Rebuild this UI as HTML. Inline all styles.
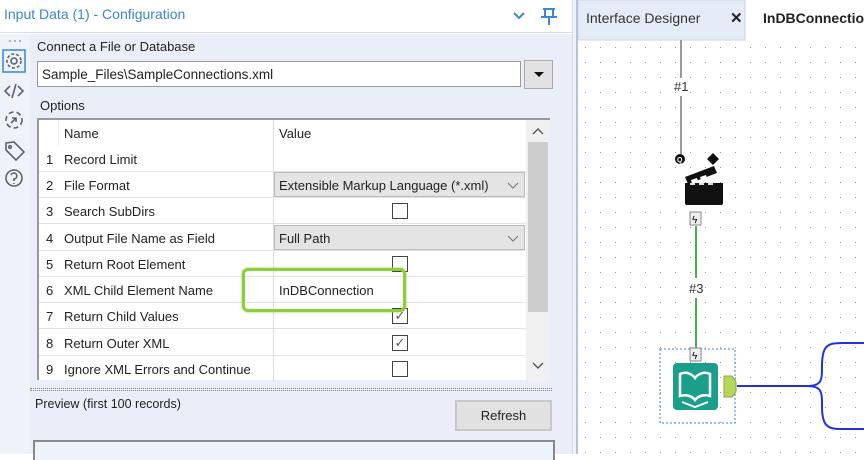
<!DOCTYPE html>
<html><head><meta charset="utf-8"><style>
*{margin:0;padding:0;box-sizing:border-box}
body{width:864px;height:454px;overflow:hidden;background:#fff;font-family:"Liberation Sans",sans-serif;font-size:13px;color:#222;position:relative}
.a{position:absolute}
.row{position:absolute;left:39px;width:487px;height:26px;border-bottom:1px solid #e2e2e2}
.row span{position:absolute;top:6px}
.n{left:7px}.nm{left:25px}
.cb{position:absolute;left:353px;top:5px;width:16px;height:16px;border:1px solid #444;background:#fff;font-size:13px;line-height:14px;text-align:center;color:#555}
.dd{position:absolute;left:235px;top:0;width:251px;height:25px;background:#e4e4e4;border:1px solid #bbb}
.dd svg{position:absolute;left:232px;top:9px}
</style></head><body>
<div class="a" style="left:0;top:0;width:572px;height:33px;background:#fff;border-bottom:1px solid #d8dde6"></div>
<div class="a" style="left:4px;top:6px;color:#3b86d6;font-size:14px">Input Data (1) - Configuration</div>
<svg class="a" style="left:512px;top:8px" width="50" height="18"><path d="M2 5l5 5 5-5" stroke="#3b86d6" stroke-width="2" fill="none"/><path d="M31 1h12M33 1v7M41 1v7M29 9h16M37 9v8" stroke="#3b86d6" stroke-width="2" fill="none"/></svg>
<div class="a" style="left:0;top:34px;width:30px;height:420px;background:#eef2f9"></div>
<div class="a" style="left:30px;top:34px;width:542px;height:420px;background:#e9eef8"></div>
<div class="a" style="left:572px;top:0;width:6px;height:454px;background:#eef2f9;border-left:1px solid #d5dbe6;border-right:2px solid #b7c3d8"></div>
<svg class="a" style="left:0;top:36px" width="30" height="160" fill="none" stroke="#5a6475" stroke-width="1.6">
<path d="M9 5h2M14 5h2M19 5h2" stroke="#999"/>
<rect x="3" y="14" width="22" height="22" stroke="#3b86d6" stroke-width="1.5"/>
<circle cx="14" cy="25" r="3"/><circle cx="14" cy="25" r="7" stroke-dasharray="3 2"/>
<path d="M10 50l-5 5 5 5M18 50l5 5-5 5M16 48l-4 14"/>
<circle cx="14" cy="84" r="8" stroke-dasharray="5 3"/><path d="M11 87l5-5M12 82h4v4"/>
<path d="M6 107l0 7 10 10 8-8-10-10z"/><circle cx="10" cy="111" r="1.3"/>
<circle cx="14" cy="142" r="8"/><path d="M11 139a3 3 0 1 1 3 4v2M14 147v1"/>
</svg>
<div class="a" style="left:37px;top:39px">Connect a File or Database</div>
<div class="a" style="left:37px;top:61px;width:484px;height:26px;background:#fff;border:1px solid #999;padding:5px 4px;font-size:13.5px">Sample_Files\SampleConnections.xml</div>
<div class="a" style="left:524px;top:60px;width:29px;height:29px;background:#e2e2e2;border:1px solid #aaa"></div>
<div class="a" style="left:534px;top:72px;border:5px solid transparent;border-top:5px solid #111;border-bottom:0"></div>
<div class="a" style="left:40px;top:98px">Options</div>
<div class="a" style="left:37px;top:118px;width:513px;height:262px;background:#fff;border:2px solid #999;border-bottom:none;border-right:none"></div>
<div class="a" style="left:273px;top:120px;width:1px;height:262px;background:#ddd"></div>
<div class="a" style="left:58px;top:120px;width:1px;height:26px;background:#eee"></div>
<div class="a" style="left:526px;top:120px;width:24px;height:262px;background:#f0f0f0"></div>
<div class="a" style="left:528px;top:142px;width:20px;height:170px;background:#cdcdcd"></div>
<svg class="a" style="left:530px;top:124px" width="16" height="250" fill="none" stroke="#555" stroke-width="1.4"><path d="M3 10l5-5 5 5M3 239l5 5 5-5"/></svg>
<div class="row" style="top:120px;border:none"><span class="nm" style="left:25px">Name</span><span style="left:240px">Value</span></div>
<div class="row" style="top:146px"><span class="n">1</span><span class="nm">Record Limit</span></div>
<div class="row" style="top:172px"><span class="n">2</span><span class="nm">File Format</span><div class="dd"><span style="left:4px;top:5px">Extensible Markup Language (*.xml)</span><svg width="12" height="8"><path d="M1 1l5 5 5-5" stroke="#777" fill="none"/></svg></div></div>
<div class="row" style="top:198px"><span class="n">3</span><span class="nm">Search SubDirs</span><div class="cb"></div></div>
<div class="row" style="top:225px"><span class="n">4</span><span class="nm">Output File Name as Field</span><div class="dd"><span style="left:4px;top:5px">Full Path</span><svg width="12" height="8"><path d="M1 1l5 5 5-5" stroke="#777" fill="none"/></svg></div></div>
<div class="row" style="top:251px"><span class="n">5</span><span class="nm">Return Root Element</span><div class="cb"></div></div>
<div class="row" style="top:277px"><span class="n">6</span><span class="nm">XML Child Element Name</span><span style="left:240px">InDBConnection</span></div>
<div class="row" style="top:303px"><span class="n">7</span><span class="nm">Return Child Values</span><div class="cb">✓</div></div>
<div class="row" style="top:330px"><span class="n">8</span><span class="nm">Return Outer XML</span><div class="cb">✓</div></div>
<div class="row" style="top:356px;border:none"><span class="n">9</span><span class="nm">Ignore XML Errors and Continue</span><div class="cb"></div></div>
<div class="a" style="left:242px;top:268px;width:164px;height:44px;border:3px solid #8bcf3a;border-radius:6px;box-shadow:0 0 2px #8bcf3a"></div>
<div class="a" style="left:30px;top:388px;width:522px;height:3px;border-top:1px dotted #888;border-bottom:1px dotted #888"></div>
<div class="a" style="left:35px;top:397px;font-size:12.5px">Preview (first 100 records)</div>
<div class="a" style="left:455px;top:400px;width:97px;height:31px;background:#e1e1e1;border:2px solid #c8c8c8;text-align:center;line-height:27px">Refresh</div>
<div class="a" style="left:33px;top:440px;width:522px;height:20px;border:2px solid #888;border-bottom:none;background:#eef2f9"></div>
<svg class="a" style="left:578px;top:0" width="286" height="454">
<defs><pattern id="d" x="7" y="2" width="15" height="15" patternUnits="userSpaceOnUse"><rect width="1" height="1" fill="#999"/></pattern></defs>
<rect x="0" y="40" width="286" height="414" fill="url(#d)"/>
<rect x="0" y="0" width="167" height="40" fill="#e6ecf7" stroke="#c9d3e4"/>
<text x="8" y="23" font-family="Liberation Sans" font-size="14" fill="#333">Interface Designer</text>
<text x="152" y="23" font-family="Liberation Sans" font-size="15" font-weight="bold" fill="#222">✕</text>
<text x="185" y="23" font-family="Liberation Sans" font-size="14" font-weight="bold" fill="#222">InDBConnection</text>
<path d="M103 40v38M103 96v58" stroke="#999" stroke-width="2"/>
<text x="96" y="91" font-family="Liberation Sans" font-size="13" fill="#333">#1</text>
<circle cx="102" cy="159" r="5" fill="#111"/><text x="99" y="162" font-size="7" fill="#fff" font-weight="bold">Q</text>
<path d="M135 153l6 6-6 6-6-6z" fill="#111"/>
<path d="M107 177l29-11 3 7-29 11z" fill="#111"/>
<path d="M113 180l6-2 1 3-6 2zM122 177l6-2 1 3-6 2z" fill="#fff"/>
<rect x="107" y="183" width="38" height="22" rx="2" fill="#111"/>
<rect x="107" y="183" width="38" height="5" fill="#111"/>
<path d="M112 184h5M121 184h5M130 184h5" stroke="#ddd" stroke-width="2"/>
<rect x="112" y="212" width="11" height="13" fill="#eee" stroke="#888"/><text x="114" y="223" font-size="10">ϟ</text>
<path d="M118 226v52M118 298v50" stroke="#4caf50" stroke-width="2"/>
<text x="111" y="293" font-family="Liberation Sans" font-size="13" fill="#333">#3</text>
<rect x="82" y="349" width="75" height="74" fill="none" stroke="#3b86d6" stroke-dasharray="2 2"/>
<rect x="112" y="348" width="11" height="13" fill="#eee" stroke="#888"/><text x="114" y="359" font-size="10">ϟ</text>
<rect x="95" y="363" width="45" height="47" rx="4" fill="#1b9e8c"/>
<path d="M102 374c6-3 12 0 15 4c3-4 9-7 15-4v22c-6-2-12 0-15 4c-3-4-9-6-15-4z" fill="none" stroke="#fff" stroke-width="2.5"/>
<path d="M104 402l13 5 13-5" stroke="#fff" stroke-width="2" fill="none"/>
<path d="M146 376h8l4 6v10l-4 5h-8z" fill="#b8d65a" stroke="#8aa83a"/>
<path d="M159 386h70c15 0 15-6 15-20c0-20 5-23 20-23h22M229 386c15 0 15 6 15 20c0 20 5 23 20 23h22" stroke="#2233dd" stroke-width="2" fill="none"/>
</svg>
</body></html>
